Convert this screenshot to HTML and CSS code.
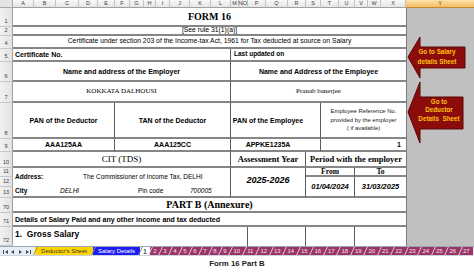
FILE: index.html
```html
<!DOCTYPE html>
<html>
<head>
<meta charset="utf-8">
<title>Form 16 Part B</title>
<link rel="stylesheet" href="styles.css">
</head>
<body>
<div class="window">
  <div class="sheet">
    <div class="corner"></div>
    <div class="ch">A</div><div class="ch">B</div><div class="ch">C</div><div class="ch">D</div><div class="ch">E</div><div class="ch">F</div><div class="ch">G</div><div class="ch">H</div><div class="ch">I</div><div class="ch">J</div><div class="ch">K</div><div class="ch">L</div><div class="ch">M</div><div class="ch">N</div><div class="ch">O</div><div class="ch">P</div><div class="ch">Q</div><div class="ch">R</div><div class="ch">S</div><div class="ch">T</div><div class="ch">U</div><div class="ch">V</div><div class="ch">W</div><div class="ch">X</div><div class="ch sel">Y</div>

    <div class="rh r1">1</div>
    <div class="rh r2">2</div>
    <div class="rh r4">4</div>
    <div class="rh r5">5</div>
    <div class="rh r6">6</div>
    <div class="rh r7">7</div>
    <div class="rh r8">8</div>
    <div class="rh r9">9</div>
    <div class="rh r10">10</div>
    <div class="rh r11">11</div>
    <div class="rh r12">12</div>
    <div class="rh r13">13</div>
    <div class="rh r70">70</div>
    <div class="rh r71">71</div>
    <div class="rh r72">72</div>

    <div class="cell xAX r1 bb serif title">FORM 16</div>
    <div class="cell xAX r2 bb small">[See rule 31(1)(a)]</div>
    <div class="cell xAX r4 bb small">Certificate under section 203 of the Income-tax Act, 1961 for Tax deducted at source on Salary</div>

    <div class="cell xAL r5 bb br left lbl">Certificate No.</div>
    <div class="cell xMX r5 bb left lbl upd">Last updated on</div>

    <div class="cell xAL r6 bb br lbl">Name and address of the Employer</div>
    <div class="cell xMX r6 bb lbl">Name and Address of the Employee</div>

    <div class="cell xAL r7 bb br serif name">KOKKATA DALHOUSI</div>
    <div class="cell xMX r7 bb serif name">Pranab banerjee</div>

    <div class="cell xAE r8 bb br lbl">PAN of the Deductor</div>
    <div class="cell xFL r8 bb br lbl">TAN of the Deductor</div>
    <div class="cell xMS r8 bb br lbl padS">PAN of the Employee</div>
    <div class="cell xTX r8 bb ref">Employee Reference No.<br>provided by the employer<br>( if available)</div>

    <div class="cell xAE r9 bb br lbl">AAA125AA</div>
    <div class="cell xFL r9 bb br lbl">AAA125CC</div>
    <div class="cell xMS r9 bb br lbl padS">APPKE1235A</div>
    <div class="cell xTX r9 bb lbl right">1</div>

    <div class="cell xAL r10 bb br serif cit">CIT (TDS)</div>
    <div class="cell xMR r10 bb br serif hd">Assessment Year</div>
    <div class="cell xSX r10 bb serif hd per">Period with the employer</div>

    <div class="cell xAL r11-12 br left addr">
      <span class="b w68">Address:</span><span>The Commissioner of Income Tax, DELHI</span>
    </div>
    <div class="cell xAL r13 bb br left addr">
      <span class="b w45">City</span><span class="it w78">DELHI</span><span class="w52">Pin code</span><span class="it">700005</span>
    </div>

    <div class="cell xMR r11-13 bb br year">2025-2026</div>
    <div class="cell xSU r11 bb br serif ft">From</div>
    <div class="cell xVX r11 bb serif ft">To</div>
    <div class="cell xSU r12-13 bb br date">01/04/2024</div>
    <div class="cell xVX r12-13 bb date">31/03/2025</div>

    <div class="cell xAX r70 bb serif title">PART B (Annexure)</div>
    <div class="cell xAX r71 bb left lbl">Details of Salary Paid and any other income and tax deducted</div>

    <div class="cell xAO r72 br left top gross">1.&nbsp; Gross Salary</div>
    <div class="cell xPR r72 br"></div>
    <div class="cell xSU r72 br"></div>
    <div class="cell xVX r72"></div>

    <div class="ycol"></div>
  </div>

  <svg class="arrows" width="474" height="246" viewBox="0 0 474 246">
    <polygon points="408,57 420,37 420,47 465,47 465,68 420,68 420,78" fill="#8c0c0c" stroke="#5a0606" stroke-width="1"/>
    <text x="437" y="53.5" class="atext">Go to Salary</text>
    <text x="437" y="63.5" class="atext">details Sheet</text>
    <polygon points="408,112 420,82 420,97 463,97 463,129 420,129 420,143" fill="#8c0c0c" stroke="#5a0606" stroke-width="1"/>
    <text x="439" y="103.5" class="atext">Go to</text>
    <text x="439" y="112" class="atext">Deductor</text>
    <text x="439" y="120.5" class="atext">Details&#160; Sheet</text>
  </svg>

  <div class="tabbar">
    <svg class="nav" width="35" height="10" viewBox="0 0 35 10">
      <rect x="3" y="3" width="1" height="4" fill="#3a4b66"/>
      <polygon points="8,3 8,7 5,5" fill="#3a4b66"/>
      <polygon points="14,3 14,7 11,5" fill="#3a4b66"/>
      <polygon points="19,3 19,7 22,5" fill="#3a4b66"/>
      <polygon points="26,3 26,7 29,5" fill="#3a4b66"/>
      <rect x="30" y="3" width="1" height="4" fill="#3a4b66"/>
    </svg>
    <div class="tab t-yellow">Deductor's Sheet</div>
    <div class="tab t-blue">Salary Details</div>
    <div class="tab t-active">1</div>
    <div class="tab t-num">2</div>
    <div class="tab t-num">3</div>
    <div class="tab t-num">4</div>
    <div class="tab t-num">5</div>
    <div class="tab t-num">6</div>
    <div class="tab t-num">7</div>
    <div class="tab t-num">8</div>
    <div class="tab t-num">9</div>
    <div class="tab t-num w2">10</div>
    <div class="tab t-num w2">11</div>
    <div class="tab t-num w2">12</div>
    <div class="tab t-num w2">13</div>
    <div class="tab t-num w2">14</div>
    <div class="tab t-num w2">15</div>
    <div class="tab t-num w2">16</div>
    <div class="tab t-num w2">17</div>
    <div class="tab t-num w2">18</div>
    <div class="tab t-num w2">19</div>
    <div class="tab t-num w2">20</div>
    <div class="tab t-num w2">21</div>
    <div class="tab t-num w2">22</div>
    <div class="tab t-num w2">23</div>
    <div class="tab t-num w2">24</div>
    <div class="tab t-num w2">25</div>
    <div class="tab t-num w2">26</div>
    <div class="tab t-num w2">27</div>
  </div>

  <div class="caption">Form 16 Part B</div>
</div>
</body>
</html>
```

FILE: styles.css
```css
* { box-sizing: border-box; margin: 0; padding: 0; }
html, body { width: 474px; height: 276px; overflow: hidden; background: #fff; }
body { font-family: "Liberation Sans", Arial, sans-serif; color: #000; }

.window { position: relative; width: 474px; height: 276px; }

.sheet {
  display: grid;
  grid-template-columns: 13px 21px 22px 23px 19px 17px 15px 14px 12px 14px 20px 21px 20px 8px 4px 5px 18px 22px 18px 15px 18px 16px 13px 13px 25px 68px;
  grid-template-rows: 8px 19px 9px 13px 13px 20px 21px 36px 13px 16px 9px 10px 11px 15px 14px 19px;
  width: 474px;
  height: 246px;
  background: #fff;
}

.corner { grid-row: 1; grid-column: 1; background: #e4e4e4; border-right: 1px solid #a8a8a8; border-bottom: 1px solid #a8a8a8; }
.ch {
  grid-row: 1;
  background: linear-gradient(#f8f8f8, #e6e6e6);
  border-right: 1px solid #c4c4c4;
  border-bottom: 1px solid #a0a0a0;
  font-size: 5.5px; color: #3c3c3c; line-height: 1;
  display: flex; align-items: center; justify-content: center;
}
.ch.sel { background: linear-gradient(#fde3ab, #f7bb5e); border-bottom-color: #c08a36; border-right: none; }

.rh {
  grid-column: 1;
  background: linear-gradient(90deg, #f2f2f2, #e2e2e2);
  border-right: 1px solid #a0a0a0;
  border-bottom: 1px solid #c8c8c8;
  font-size: 5.5px; color: #3c3c3c; line-height: 1;
  display: flex; align-items: flex-end; justify-content: center;
  padding-bottom: 2px;
}

/* rows */
.r1 { grid-row: 2; }
.r2 { grid-row: 3; }
.r4 { grid-row: 4; }
.r5 { grid-row: 5; }
.r6 { grid-row: 6; }
.r7 { grid-row: 7; }
.r8 { grid-row: 8; }
.r9 { grid-row: 9; }
.r10 { grid-row: 10; }
.r11 { grid-row: 11; }
.r12 { grid-row: 12; }
.r13 { grid-row: 13; }
.r70 { grid-row: 14; }
.r71 { grid-row: 15; }
.r72 { grid-row: 16; }
.r11-12 { grid-row: 11 / 13; }
.r11-13 { grid-row: 11 / 14; }
.r12-13 { grid-row: 12 / 14; }

/* columns */
.xAX { grid-column: 2 / 26; }
.xAL { grid-column: 2 / 14; }
.xMX { grid-column: 14 / 26; }
.xAE { grid-column: 2 / 7; }
.xFL { grid-column: 7 / 14; }
.xMS { grid-column: 14 / 21; }
.xTX { grid-column: 21 / 26; }
.xMR { grid-column: 14 / 20; }
.xSX { grid-column: 20 / 26; }
.xSU { grid-column: 20 / 23; }
.xVX { grid-column: 23 / 26; }
.xAO { grid-column: 2 / 17; }
.xPR { grid-column: 17 / 20; }

.ycol { grid-column: 26; grid-row: 2 / 17; background: #c0c0c0; border-left: 1px solid #7a7a7a; }

.cell {
  display: flex; align-items: center; justify-content: center;
  white-space: nowrap; overflow: hidden; line-height: 1;
  background: #fff;
}
.bb { border-bottom: 2px solid #868686; }
.br { border-right: 1px solid #5c5c5c; }
.left { justify-content: flex-start; padding-left: 2px; }
.right { justify-content: flex-end; padding-right: 5px; }
.top { align-items: flex-start; padding-top: 3px; }
.padS { padding-right: 15px; }

.serif { font-family: "Liberation Serif", "Times New Roman", serif; }
.title { font-size: 10px; font-weight: bold; }
.small { font-size: 6.8px; }
.lbl { font-size: 7px; font-weight: bold; }
.upd { padding-left: 3px; font-size: 6.5px; }
.name { font-size: 7px; }
.ref { font-size: 5.9px; line-height: 8.5px; white-space: normal; text-align: center; color: #222; }
.cit { font-size: 9px; }
.hd { font-size: 8.5px; font-weight: bold; }
.ft { font-size: 7.5px; font-weight: bold; }
.addr { font-size: 6.5px; }
.addr .b { font-weight: bold; }
.addr .it { font-style: italic; }
.w68 { width: 68px; flex: none; }
.w45 { width: 45px; flex: none; }
.w78 { width: 78px; flex: none; }
.w52 { width: 52px; flex: none; }
.year { font-size: 9px; font-weight: bold; font-style: italic; padding-bottom: 3px; }
.date { font-size: 7.5px; font-weight: bold; font-style: italic; }
.gross { font-size: 8.5px; font-weight: bold; }

.arrows { position: absolute; left: 0; top: 0; }
.atext { font-family: "Liberation Sans", Arial, sans-serif; font-size: 6.3px; font-weight: bold; fill: #ffc20e; text-anchor: middle; }

.tabbar {
  display: flex; align-items: flex-start;
  height: 10px; overflow: hidden;
  background: #e9edf2;
  border-top: 1px solid #9aa6b6;
  border-bottom: 1px solid #c9d2de;
}
.nav { flex: none; }
.tab {
  flex: none; position: relative;
  height: 8px;
  display: flex; align-items: center; justify-content: center;
  font-size: 6px; line-height: 1;
}
.tab::before {
  content: ""; position: absolute; left: 0; top: 0; bottom: 0; width: 1px;
  background: #e7c9d8; transform: skewX(-25deg);
}
.t-yellow { width: 58px; background: #ffd500; color: #333; border-radius: 0 0 0 3px; }
.t-yellow::before { background: #b89a00; }
.t-blue { width: 47px; background: #1c1cf5; color: #fff; }
.t-blue::before { background: #8080ff; }
.t-active { width: 10px; background: #fff; color: #000; text-decoration: underline; font-size: 7px; }
.t-active::before { background: #888; }
.t-num { width: 10px; background: #9b3567; color: #f4e4ec; }
.t-num.w2 { width: 13.5px; }

.caption {
  height: 20px;
  display: flex; justify-content: center; align-items: flex-start;
  padding-top: 3px;
  font-size: 7.8px; font-weight: bold; color: #222;
}
```
